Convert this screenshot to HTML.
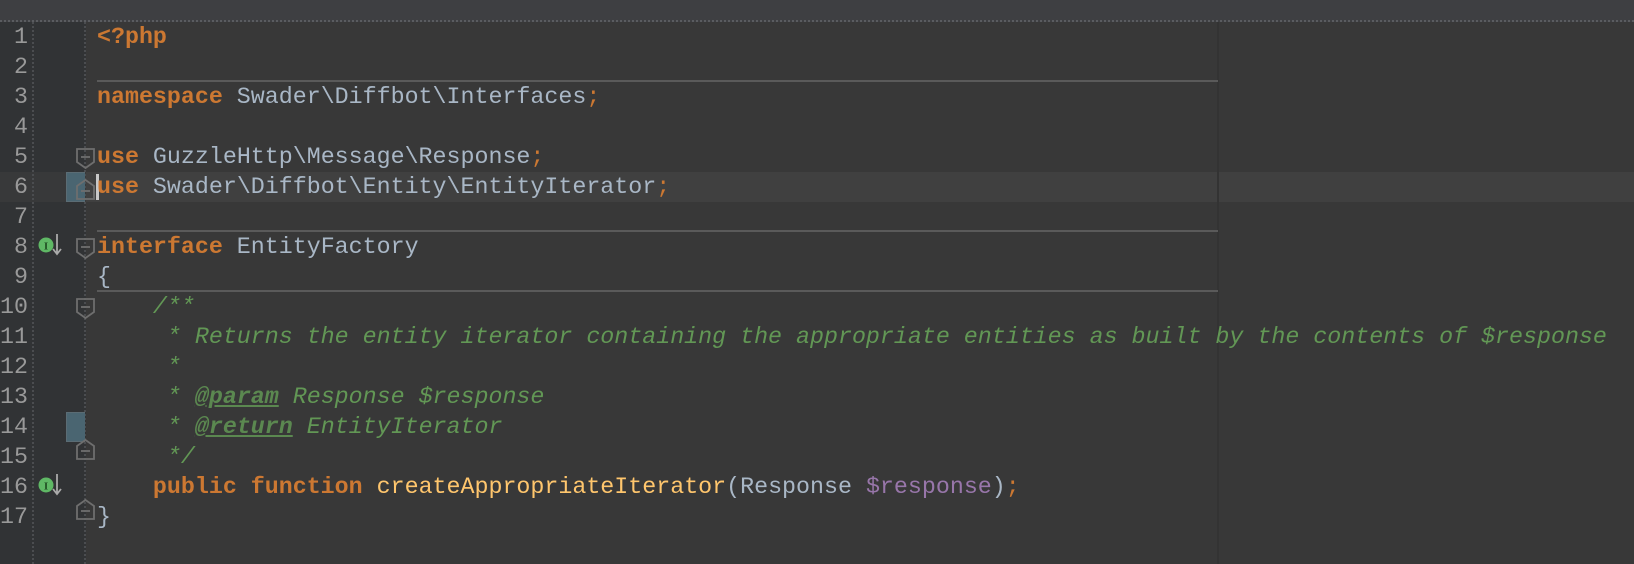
<!DOCTYPE html>
<html><head><meta charset="utf-8"><style>
body{margin:0;width:1634px;height:564px;background:#383838;overflow:hidden;position:relative;font-family:"Liberation Mono",monospace;}
.top{position:absolute;left:0;top:0;width:1634px;height:20px;background:#3e3f42;border-bottom:2px dotted #5a5c60;}
.gut{position:absolute;left:0;top:22px;width:86px;height:542px;background:#313335;}
.dv{position:absolute;top:22px;height:542px;border-left:2px dotted #4b4d50;}
.cur{position:absolute;left:0;top:172px;width:1634px;height:30px;background:#404040;}
.cg{position:absolute;left:0;top:172px;width:86px;height:30px;background:#38393a;}
.ln{position:absolute;left:0;width:28px;text-align:right;color:#999;font-size:23.3px;line-height:30px;}
.code{position:absolute;left:97px;top:22px;font-size:23.3px;line-height:30px;color:#a9b7c6;white-space:pre;}
.k{color:#cc7832;font-weight:bold}.c{color:#629755;font-style:italic}.t{color:#629755;font-style:italic;font-weight:bold;text-decoration:underline;opacity:.85}
.f{color:#ffc66d}.v{color:#9876aa}.s{color:#cc7832}
.sep{position:absolute;left:97px;width:1121px;height:2px;background:#5a5a5a;}
.mg{position:absolute;left:1217px;top:22px;width:2px;height:542px;background:#333;}
.chg{position:absolute;left:66px;width:18px;height:28px;background:#4a6571;border:1px solid #5b6c74;border-right:none}
</style></head><body>
<div class="top"></div>
<div class="gut"></div>
<div class="cur"></div>
<div class="cg"></div>
<div class="mg"></div>
<div class="dv" style="left:32px"></div>
<div class="dv" style="left:84px"></div>
<div class="sep" style="top:80px"></div>
<div class="sep" style="top:230px"></div>
<div class="sep" style="top:290px"></div>
<div class="chg" style="top:172px"></div>
<div class="chg" style="top:412px"></div>
<div class="ln" style="top:22px">1</div><div class="ln" style="top:52px">2</div><div class="ln" style="top:82px">3</div><div class="ln" style="top:112px">4</div><div class="ln" style="top:142px">5</div><div class="ln" style="top:172px">6</div><div class="ln" style="top:202px">7</div><div class="ln" style="top:232px">8</div><div class="ln" style="top:262px">9</div><div class="ln" style="top:292px">10</div><div class="ln" style="top:322px">11</div><div class="ln" style="top:352px">12</div><div class="ln" style="top:382px">13</div><div class="ln" style="top:412px">14</div><div class="ln" style="top:442px">15</div><div class="ln" style="top:472px">16</div><div class="ln" style="top:502px">17</div>
<svg style="position:absolute;left:0;top:0" width="100" height="564">
<g fill="none" stroke="#6e6e6e" stroke-width="1.8">
<path d="M77 149h17v13l-8.5 6l-8.5-6z"/><path d="M81 157h9"/>
<path d="M77 199h17v-13l-8.5-6l-8.5 6z"/><path d="M81 191h9"/>
<path d="M77 239h17v13l-8.5 6l-8.5-6z"/><path d="M81 247h9"/>
<path d="M77 299h17v13l-8.5 6l-8.5-6z"/><path d="M81 307h9"/>
<path d="M77 459h17v-13l-8.5-6l-8.5 6z"/><path d="M81 451h9"/>
<path d="M77 519h17v-13l-8.5-6l-8.5 6z"/><path d="M81 511h9"/>
</g>
<g>
<circle cx="46" cy="245" r="7.5" fill="#5fb865"/><text x="46" y="249.5" font-size="11" font-family="Liberation Serif" text-anchor="middle" fill="#1f4d22" font-weight="bold">I</text>
<path d="M57 234v19M53 249l4 5l4-5" stroke="#aaa" stroke-width="1.8" fill="none"/>
<circle cx="46" cy="485" r="7.5" fill="#5fb865"/><text x="46" y="489.5" font-size="11" font-family="Liberation Serif" text-anchor="middle" fill="#1f4d22" font-weight="bold">I</text>
<path d="M57 474v19M53 489l4 5l4-5" stroke="#aaa" stroke-width="1.8" fill="none"/>
</g>
<rect x="96" y="174" width="3" height="26" fill="#c8c8c8"/>
</svg>
<div class="code"><span class="k">&lt;?php</span>

<span class="k">namespace</span> Swader\Diffbot\Interfaces<span class="s">;</span>

<span class="k">use</span> GuzzleHttp\Message\Response<span class="s">;</span>
<span class="k">use</span> Swader\Diffbot\Entity\EntityIterator<span class="s">;</span>

<span class="k">interface</span> EntityFactory
{
    <span class="c">/**</span>
<span class="c">     * Returns the entity iterator containing the appropriate entities as built by the contents of $response</span>
<span class="c">     *</span>
<span class="c">     * </span><span class="t">@param</span><span class="c"> Response $response</span>
<span class="c">     * </span><span class="t">@return</span><span class="c"> EntityIterator</span>
<span class="c">     */</span>
    <span class="k">public function</span> <span class="f">createAppropriateIterator</span>(Response <span class="v">$response</span>)<span class="s">;</span>
}</div>
</body></html>
